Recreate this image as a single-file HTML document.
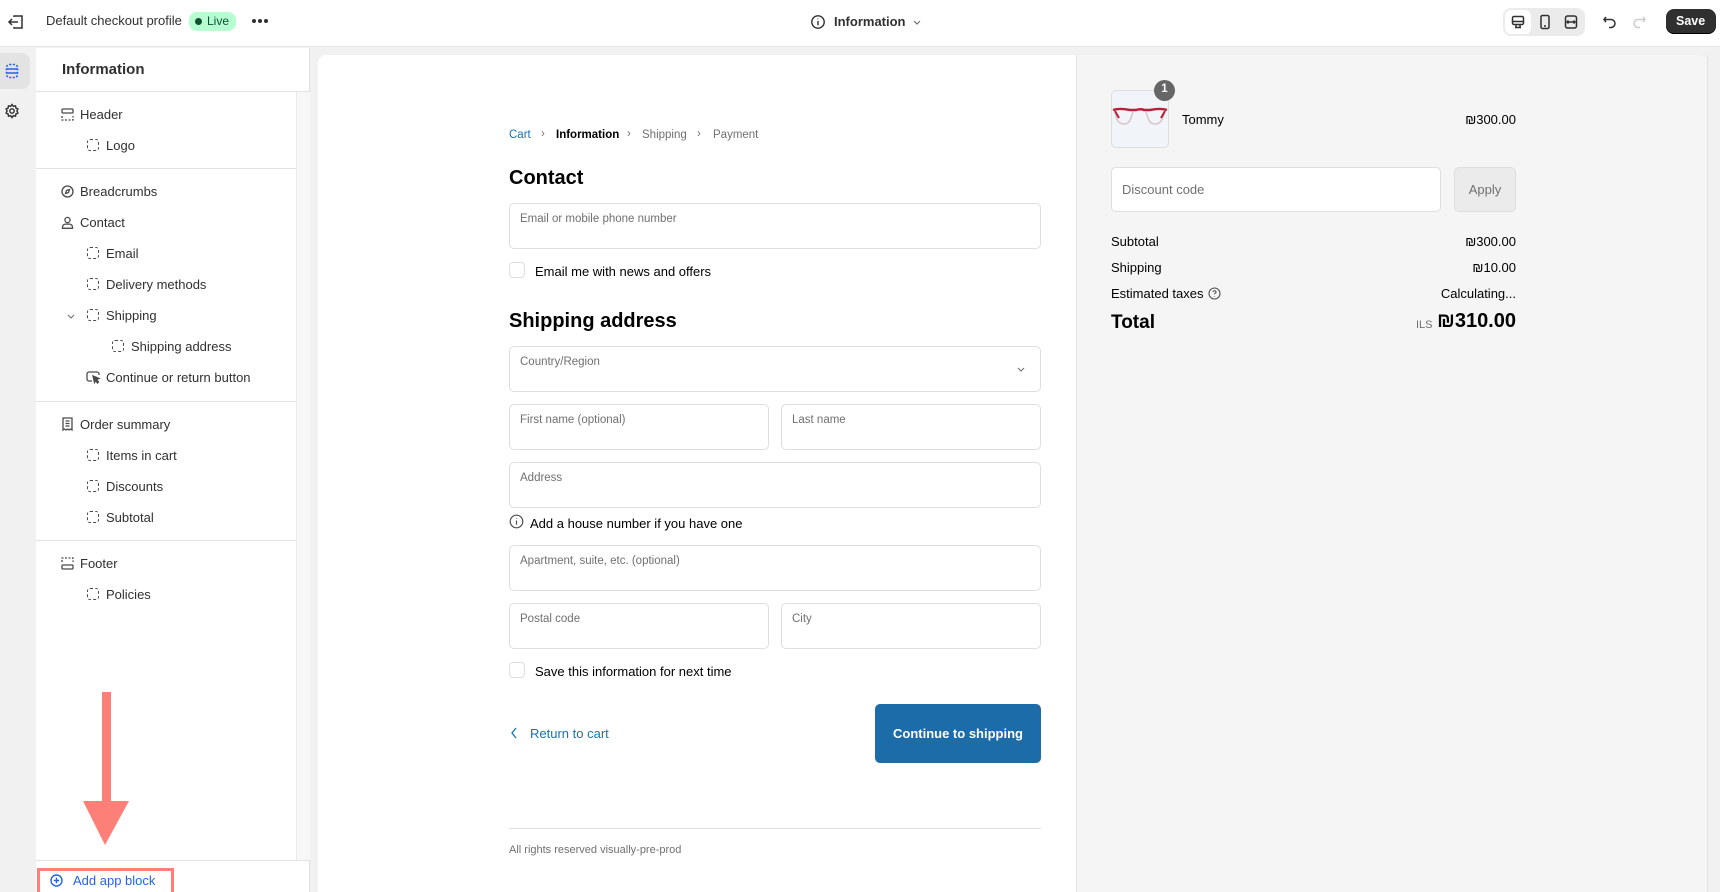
<!DOCTYPE html>
<html><head><meta charset="utf-8"><style>
*{box-sizing:border-box;margin:0;padding:0}
body{width:1720px;height:892px;overflow:hidden;font-family:"Liberation Sans",sans-serif;background:#f1f1f1;color:#303030;position:relative}
.a{position:absolute}
.t{position:absolute;white-space:nowrap}
.top{left:0;top:0;width:1720px;height:47px;background:#fff;border-bottom:1px solid #e3e3e3}
.rail{left:0;top:48px;width:36px;height:844px;background:#f1f1f1}
.panel{left:36px;top:48px;width:274px;height:844px;background:#fff;border-right:1px solid #e3e3e3}
.sb{left:296px;top:92px;width:14px;height:768px;background:#f7f7f7;border-left:1px solid #ebebeb}
.it{font-size:13px;color:#303030}
.sep{position:absolute;left:36px;width:260px;height:1px;background:#e3e3e3}
.ic{position:absolute;width:12px;height:12px;border:1.5px dashed #4a4a4a;border-radius:3px}
.card{left:318px;top:55px;width:1389px;height:837px;background:#fff;border-radius:8px 8px 0 0;overflow:hidden}
.inp{position:absolute;border:1px solid #dedede;border-radius:5px;background:#fff}
.inp span{position:absolute;left:10px;top:9px;font-size:11.5px;color:#707070}
.cb{position:absolute;width:16px;height:16px;border:1px solid #dedede;border-radius:4px;background:#fff}
.f{font-size:13.5px;color:#000}
.g{font-size:13px;color:#000}
.dot{position:absolute;width:4px;height:4px;border-radius:50%;background:#303030;top:19px}
</style></head><body>
<div class="a top"></div>
<svg class="a" style="left:6px;top:12px" width="20" height="20" viewBox="0 0 20 20" fill="none" stroke="#303030" stroke-width="1.5"><path d="M8 5V4h8v12H8v-1M12 10H3M6 7l-3 3 3 3"/></svg>
<div class="t" style="left:46px;top:13px;font-size:13px;color:#303030">Default checkout profile</div>
<div class="a" style="left:189px;top:12px;width:47px;height:19px;background:#b4fed2;border-radius:8px"></div>
<div class="a" style="left:195px;top:18px;width:7px;height:7px;border-radius:50%;background:#0c5132"></div>
<div class="t" style="left:207px;top:14px;font-size:12px;color:#0c5132">Live</div>
<div class="dot" style="left:252px"></div><div class="dot" style="left:258px"></div><div class="dot" style="left:264px"></div>
<svg class="a" style="left:810px;top:14px" width="16" height="16" viewBox="0 0 16 16" fill="none" stroke="#303030" stroke-width="1.4"><circle cx="8" cy="8" r="6.2"/><path d="M8 7v4.2M8 4.6v.6"/></svg>
<div class="t" style="left:834px;top:14px;font-size:13px;font-weight:bold">Information</div>
<svg class="a" style="left:912px;top:17px" width="10" height="10" viewBox="0 0 10 10" fill="none" stroke="#707070" stroke-width="1.2"><path d="M2 4l3 3 3-3"/></svg>
<div class="a" style="left:1503px;top:8px;width:82px;height:28px;background:#ebebeb;border-radius:8px"></div>
<div class="a" style="left:1505px;top:10px;width:26px;height:24px;background:#fff;border-radius:6px"></div>
<svg class="a" style="left:1510px;top:14px" width="16" height="16" viewBox="0 0 16 16" fill="none" stroke="#303030" stroke-width="1.5"><rect x="2.5" y="2.5" width="11" height="8" rx="1.5"/><path d="M2.5 7.5h11M6 10.5v3M10 10.5v3M5 13.5h6"/></svg>
<svg class="a" style="left:1537px;top:14px" width="16" height="16" viewBox="0 0 16 16" fill="none" stroke="#303030" stroke-width="1.5"><rect x="4" y="1.5" width="8" height="13" rx="1.5"/><path d="M7 12h2"/></svg>
<svg class="a" style="left:1563px;top:14px" width="16" height="16" viewBox="0 0 16 16" fill="none" stroke="#303030" stroke-width="1.5"><rect x="2.5" y="2" width="11" height="12" rx="2"/><path d="M4.5 8h7M5.5 6.5L4 8l1.5 1.5M10.5 6.5L12 8l-1.5 1.5"/></svg>
<svg class="a" style="left:1601px;top:13px" width="18" height="18" viewBox="0 0 18 18" fill="none" stroke="#303030" stroke-width="1.5"><path d="M5 4L3 6.5 5 9M3 6.5h7a4 4 0 010 8H8"/></svg>
<svg class="a" style="left:1630px;top:13px" width="18" height="18" viewBox="0 0 18 18" fill="none" stroke="#cccccc" stroke-width="1.5"><path d="M13 4l2 2.5L13 9M15 6.5H8a4 4 0 000 8h2"/></svg>
<div class="a" style="left:1666px;top:9px;width:50px;height:25px;background:#303030;border-radius:8px;box-shadow:inset 0 -1px 0 #000"></div>
<div class="t" style="left:1676px;top:14px;font-size:12.5px;color:#fff;font-weight:bold">Save</div>

<div class="a rail"></div>
<div class="a" style="left:0;top:53px;width:30px;height:36px;background:#e3e3e3;border-radius:0 8px 8px 0"></div>
<svg class="a" style="left:5px;top:63px" width="14" height="16" viewBox="0 0 14 16" fill="none" stroke="#2463eb" stroke-width="1.5"><rect x="1.5" y="1.5" width="11" height="13" rx="3" stroke-dasharray="2 1.5"/><path d="M1.5 6h11M1.5 10h11"/></svg>
<svg class="a" style="left:4px;top:103px" width="16" height="16" viewBox="0 0 16 16" fill="none" stroke="#303030" stroke-width="1.4"><circle cx="8" cy="8" r="2.2"/><path d="M8 1.5l1.3 1.8 2.2-.5.4 2.2 2 1-1 2 1 2-2 1-.4 2.2-2.2-.5L8 14.5l-1.3-1.8-2.2.5-.4-2.2-2-1 1-2-1-2 2-1 .4-2.2 2.2.5z"/></svg>

<div class="a panel"></div>
<div class="t" style="left:62px;top:61px;font-size:15px;font-weight:bold;color:#303030">Information</div>
<div class="sep" style="top:91px;width:274px"></div>
<div class="a sb"></div>
<svg class="a" style="left:61px;top:108px" width="13" height="13" viewBox="0 0 13 13" fill="none" stroke="#4a4a4a" stroke-width="1.3"><rect x="1" y="1" width="11" height="4" rx="1"/><path d="M1 8v4h11V8" stroke-dasharray="2 1.5"/></svg>
<div class="t it" style="left:80px;top:107px">Header</div>
<div class="ic" style="left:87px;top:139px"></div><div class="t it" style="left:106px;top:138px">Logo</div>
<div class="sep" style="top:168px"></div>
<svg class="a" style="left:61px;top:185px" width="13" height="13" viewBox="0 0 13 13" fill="none" stroke="#4a4a4a" stroke-width="1.3"><circle cx="6.5" cy="6.5" r="5.5"/><path d="M4.5 8.5l1-3 3-1-1 3z"/></svg>
<div class="t it" style="left:80px;top:184px">Breadcrumbs</div>
<svg class="a" style="left:61px;top:216px" width="13" height="13" viewBox="0 0 13 13" fill="none" stroke="#4a4a4a" stroke-width="1.3"><circle cx="6.5" cy="4" r="2.6"/><path d="M1.5 12.3v-1.2a3 3 0 013-3h4a3 3 0 013 3v1.2z"/></svg>
<div class="t it" style="left:80px;top:215px">Contact</div>
<div class="ic" style="left:87px;top:247px"></div><div class="t it" style="left:106px;top:246px">Email</div>
<div class="ic" style="left:87px;top:278px"></div><div class="t it" style="left:106px;top:277px">Delivery methods</div>
<svg class="a" style="left:66px;top:311px" width="10" height="10" viewBox="0 0 10 10" fill="none" stroke="#707070" stroke-width="1.1"><path d="M2 4l3 3 3-3"/></svg>
<div class="ic" style="left:87px;top:309px"></div><div class="t it" style="left:106px;top:308px">Shipping</div>
<div class="ic" style="left:112px;top:340px"></div><div class="t it" style="left:131px;top:339px">Shipping address</div>
<svg class="a" style="left:86px;top:370px" width="15" height="14" viewBox="0 0 15 14" fill="none" stroke="#4a4a4a" stroke-width="1.3"><path d="M6 11H3a2 2 0 01-2-2V4a2 2 0 012-2h8a2 2 0 012 2v1"/><path d="M7 6l6 2.5-2.5 1L12.5 12 11.5 13l-2-2.5-1 2z" fill="#4a4a4a"/></svg>
<div class="t it" style="left:106px;top:370px">Continue or return button</div>
<div class="sep" style="top:401px"></div>
<svg class="a" style="left:61px;top:417px" width="13" height="14" viewBox="0 0 13 14" fill="none" stroke="#4a4a4a" stroke-width="1.3"><path d="M2 1h9v12l-1.5-1-1.5 1-1.5-1-1.5 1-1.5-1L2 13z"/><path d="M4.5 4h4M4.5 6.5h4M4.5 9h4"/></svg>
<div class="t it" style="left:80px;top:417px">Order summary</div>
<div class="ic" style="left:87px;top:449px"></div><div class="t it" style="left:106px;top:448px">Items in cart</div>
<div class="ic" style="left:87px;top:480px"></div><div class="t it" style="left:106px;top:479px">Discounts</div>
<div class="ic" style="left:87px;top:511px"></div><div class="t it" style="left:106px;top:510px">Subtotal</div>
<div class="sep" style="top:540px"></div>
<svg class="a" style="left:61px;top:557px" width="13" height="13" viewBox="0 0 13 13" fill="none" stroke="#4a4a4a" stroke-width="1.3"><path d="M1 5V1h11v4" stroke-dasharray="2 1.5"/><rect x="1" y="8" width="11" height="4" rx="1"/></svg>
<div class="t it" style="left:80px;top:556px">Footer</div>
<div class="ic" style="left:87px;top:588px"></div><div class="t it" style="left:106px;top:587px">Policies</div>
<div class="sep" style="top:860px;width:274px"></div>
<svg class="a" style="left:80px;top:692px" width="52" height="155" viewBox="0 0 52 155"><rect x="22" y="0" width="9" height="112" fill="#fc8078"/><path d="M3 109h46L25 153z" fill="#fc8078"/></svg>
<div class="a" style="left:37px;top:868px;width:137px;height:24px;border:3px solid #fc8078;border-bottom:none"></div>
<svg class="a" style="left:50px;top:874px" width="13" height="13" viewBox="0 0 13 13" fill="none" stroke="#2463eb" stroke-width="1.4"><circle cx="6.5" cy="6.5" r="5.5"/><path d="M6.5 3.8v5.4M3.8 6.5h5.4"/></svg>
<div class="t" style="left:73px;top:873px;font-size:13px;color:#2463eb">Add app block</div>

<div class="a card">
  <div class="a" style="left:758px;top:0;width:631px;height:837px;background:#f5f5f5;border-left:1px solid #e3e3e3"></div>
</div>
<div class="a" style="left:1707px;top:55px;width:1px;height:837px;background:#e3e3e3"></div>

<div class="t" style="left:509px;top:129px;font-size:11.5px;color:#1773b0">Cart</div>
<div class="t" style="left:541px;top:128px;font-size:11.5px;color:#707070">›</div>
<div class="t" style="left:556px;top:129px;font-size:11.5px;color:#000;font-weight:bold">Information</div>
<div class="t" style="left:627px;top:128px;font-size:11.5px;color:#707070">›</div>
<div class="t" style="left:642px;top:129px;font-size:11.5px;color:#707070">Shipping</div>
<div class="t" style="left:697px;top:128px;font-size:11.5px;color:#707070">›</div>
<div class="t" style="left:713px;top:129px;font-size:11.5px;color:#707070">Payment</div>
<div class="t" style="left:509px;top:167px;font-size:20px;font-weight:bold;color:#000">Contact</div>
<div class="inp" style="left:509px;top:203px;width:532px;height:46px"><span>Email or mobile phone number</span></div>
<div class="cb" style="left:509px;top:262px"></div>
<div class="t g" style="left:535px;top:264px">Email me with news and offers</div>
<div class="t" style="left:509px;top:310px;font-size:20px;font-weight:bold;color:#000">Shipping address</div>
<div class="inp" style="left:509px;top:346px;width:532px;height:46px"><span>Country/Region</span></div>
<svg class="a" style="left:1016px;top:364px" width="10" height="10" viewBox="0 0 10 10" fill="none" stroke="#707070" stroke-width="1.1"><path d="M2 4l3 3 3-3"/></svg>
<div class="inp" style="left:509px;top:404px;width:260px;height:46px"><span>First name (optional)</span></div>
<div class="inp" style="left:781px;top:404px;width:260px;height:46px"><span>Last name</span></div>
<div class="inp" style="left:509px;top:462px;width:532px;height:46px"><span>Address</span></div>
<svg class="a" style="left:509px;top:514px" width="15" height="15" viewBox="0 0 15 15" fill="none" stroke="#505050" stroke-width="1.2"><circle cx="7.5" cy="7.5" r="6.3"/><path d="M7.5 6.5v4.3M7.5 4.2v.7"/></svg>
<div class="t g" style="left:530px;top:516px">Add a house number if you have one</div>
<div class="inp" style="left:509px;top:545px;width:532px;height:46px"><span>Apartment, suite, etc. (optional)</span></div>
<div class="inp" style="left:509px;top:603px;width:260px;height:46px"><span>Postal code</span></div>
<div class="inp" style="left:781px;top:603px;width:260px;height:46px"><span>City</span></div>
<div class="cb" style="left:509px;top:662px"></div>
<div class="t g" style="left:535px;top:664px">Save this information for next time</div>
<svg class="a" style="left:509px;top:726px" width="10" height="14" viewBox="0 0 10 14" fill="none" stroke="#1773b0" stroke-width="1.3"><path d="M7 2L3 7l4 5"/></svg>
<div class="t" style="left:530px;top:726px;font-size:13px;color:#1773b0">Return to cart</div>
<div class="a" style="left:875px;top:704px;width:166px;height:59px;background:#1b6ca8;border-radius:5px"></div>
<div class="t" style="left:875px;top:726px;width:166px;text-align:center;font-size:13px;font-weight:bold;color:#fff">Continue to shipping</div>
<div class="a" style="left:509px;top:828px;width:532px;height:1px;background:#dedede"></div>
<div class="t" style="left:509px;top:844px;font-size:11px;color:#707070">All rights reserved visually-pre-prod</div>

<div class="a" style="left:1111px;top:90px;width:58px;height:58px;border:1px solid #dedede;border-radius:5px;background:#f1f4f8"></div>
<svg class="a" style="left:1111px;top:106px" width="58" height="24" viewBox="0 0 58 24" fill="none"><path d="M2 4c6-2 12-1 17 0h6c3-1 6-1 8 0h6c5-1 11-2 17 0" stroke="#b8213a" stroke-width="2.5"/><path d="M4 5c1 8 3 13 9 13s7-6 9-12M35 6c2 6 3 12 9 12s8-5 10-13" stroke="#d9c3c7" stroke-width="1.5"/><path d="M4 5l4 7M54 5l-4 7" stroke="#b8213a" stroke-width="2"/></svg>
<div class="a" style="left:1154px;top:80px;width:21px;height:21px;border-radius:50%;background:#666"></div>
<div class="t" style="left:1154px;top:83px;width:21px;text-align:center;font-size:11.5px;font-weight:bold;color:#fff">1</div>
<div class="t g" style="left:1182px;top:112px">Tommy</div>
<div class="t g" style="left:1416px;top:112px;width:100px;text-align:right">₪300.00</div>
<div class="inp" style="left:1111px;top:167px;width:330px;height:45px"><span style="top:14px;font-size:13px;left:10px">Discount code</span></div>
<div class="a" style="left:1454px;top:167px;width:62px;height:45px;border:1px solid #dedede;border-radius:5px;background:#ebebeb"></div>
<div class="t" style="left:1454px;top:182px;width:62px;text-align:center;font-size:13px;color:#707070">Apply</div>
<div class="t g" style="left:1111px;top:234px">Subtotal</div>
<div class="t g" style="left:1416px;top:234px;width:100px;text-align:right">₪300.00</div>
<div class="t g" style="left:1111px;top:260px">Shipping</div>
<div class="t g" style="left:1416px;top:260px;width:100px;text-align:right">₪10.00</div>
<div class="t g" style="left:1111px;top:286px">Estimated taxes</div>
<svg class="a" style="left:1208px;top:287px" width="13" height="13" viewBox="0 0 13 13" fill="none" stroke="#505050" stroke-width="1.1"><circle cx="6.5" cy="6.5" r="5.5"/><path d="M5 5a1.5 1.5 0 113 .5c-.5.5-1.5.8-1.5 1.8M6.5 9v.5"/></svg>
<div class="t g" style="left:1396px;top:286px;width:120px;text-align:right">Calculating...</div>
<div class="t" style="left:1111px;top:312px;font-size:19px;font-weight:bold;color:#000">Total</div>
<div class="t" style="left:1416px;top:319px;font-size:11px;color:#707070">ILS</div>
<div class="t" style="left:1416px;top:310px;width:100px;text-align:right;font-size:20px;font-weight:bold;color:#000">₪310.00</div>
</body></html>
